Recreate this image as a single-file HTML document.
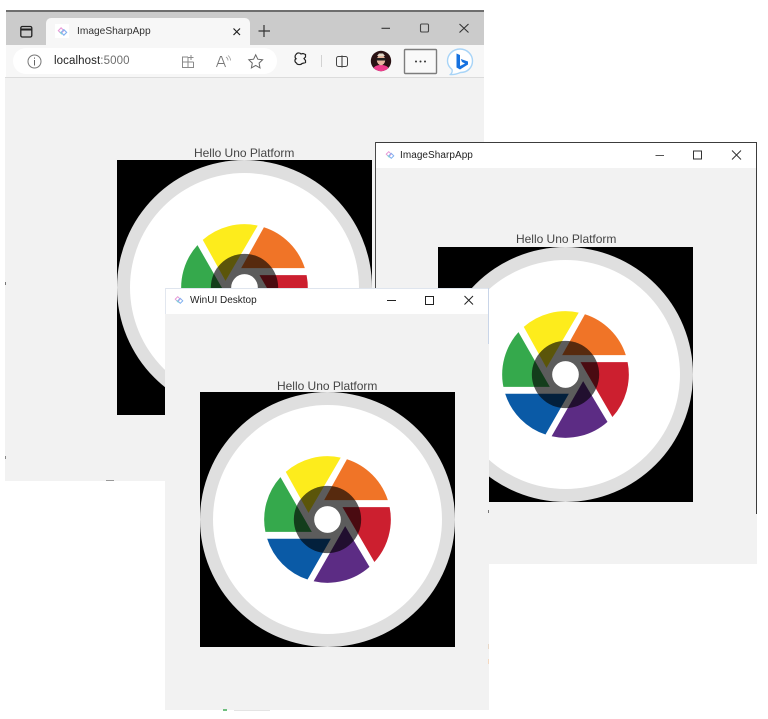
<!DOCTYPE html>
<html>
<head>
<meta charset="utf-8">
<style>
html,body{margin:0;padding:0;background:#fff;}
body{width:768px;height:719px;position:relative;overflow:hidden;font-family:"Liberation Sans",sans-serif;}
#w{position:absolute;left:0;top:0;width:768px;height:719px;overflow:hidden;filter:blur(.3px);}
.a{position:absolute;}
.hello{position:absolute;font-size:12px;line-height:14px;color:#454545;white-space:nowrap;letter-spacing:-.02px;}
.ttl{position:absolute;font-size:10px;line-height:13px;color:#222;white-space:nowrap;}
svg{position:absolute;overflow:visible;}
</style>
</head>
<body>
<svg width="0" height="0" style="position:absolute">
<defs>
<symbol id="pic" viewBox="0 0 255 255">
<rect width="255" height="255" fill="#000"/>
<circle cx="127.5" cy="127.5" r="127.5" fill="#dfdfdf"/>
<circle cx="127.5" cy="127.5" r="114.5" fill="#fff"/>
<g transform="translate(127.5 127.5) scale(.33333) translate(-232 -225)">
<path d="M106.800 82.100A190 190 0 0 1 271.700 39.200L175 205Z" fill="#fdec1c"/>
<path d="M290.300 44.200A190 190 0 0 1 413 167H222Z" fill="#f07427"/>
<path d="M418.300 187.700A190 190 0 0 1 372.700 352.600L277 187.700Z" fill="#cc1f2f"/>
<path d="M358 367A190 190 0 0 1 190.400 410.400L285 245Z" fill="#5c2c84"/>
<path d="M172 405A190 190 0 0 1 51 282.700H242Z" fill="#0a5aa6"/>
<path d="M45.700 262.300A190 190 0 0 1 90.900 97.800L185 262.300Z" fill="#35a94c"/>
<circle cx="232" cy="225" r="101" fill="#000" opacity=".64"/>
<circle cx="232" cy="225" r="40" fill="#fff"/>
</g>
</symbol>
<symbol id="uno" viewBox="0 0 12 12">
<path d="M4.500 2L7.500 5 4.500 8 1.500 5Z" fill="none" stroke="#e79ad6" stroke-width="1.200"/>
<path d="M7.500 4L10.500 7 7.500 10 4.500 7Z" fill="none" stroke="#7fb0f0" stroke-width="1.200"/>
<path d="M3 6.500L5.500 9" stroke="#7fd8d0" stroke-width="1.200"/>
</symbol>
</defs>
</svg>
<div id="w">

<!-- Browser window -->
<div class="a" style="left:5px;top:78px;width:479px;height:403px;background:#f2f2f2"></div>
<div class="a" style="left:6px;top:12px;width:478px;height:33px;background:#cbcbcb"></div>
<div class="a" style="left:6px;top:10px;width:478px;height:2px;background:#6e6e6e"></div>
<div class="a" style="left:46px;top:18px;width:204px;height:27px;background:#f7f7f7;border-radius:5px 5px 0 0"></div>
<div class="a" style="left:6px;top:45px;width:478px;height:32px;background:#f7f7f7"></div>
<div class="a" style="left:5px;top:77px;width:479px;height:1px;background:#dcdcdc"></div>
<div class="a" style="left:13px;top:48px;width:264px;height:26px;background:#fff;border-radius:13px"></div>
<div class="a" style="left:55px;top:24px;width:14px;height:14px;background:#fff"></div>
<svg style="left:57px;top:26px" width="11" height="11"><use href="#uno" width="11" height="11"/></svg>
<div class="a" style="left:77px;top:25px;font-size:10.2px;line-height:13px;color:#333;white-space:nowrap">ImageSharpApp</div>
<div class="a" style="left:54px;top:54px;font-size:11.5px;line-height:14px;color:#222;white-space:nowrap;letter-spacing:.1px">localhost<span style="color:#6e6e6e">:5000</span></div>

<svg style="left:0;top:0" width="500" height="80" fill="none" stroke="#333" stroke-width="1">
<!-- tab actions -->
<rect x="20.800" y="26.500" width="11" height="10.500" rx="1.500" stroke="#222" stroke-width="1.300"/>
<path d="M21 29.500H31.500" stroke="#222" stroke-width="2"/>
<path d="M233.500 28.500L240 35M240 28.500L233.500 35" stroke="#222" stroke-width="1.200"/>
<path d="M264 25V37M258.500 31H270" stroke="#333" stroke-width="1.200"/>
<!-- info -->
<circle cx="34.500" cy="61.500" r="6.500" stroke="#777"/>
<path d="M34.500 60V65.500M34.500 57.500V58.800" stroke="#666"/>
<!-- split add -->
<path d="M188 57H182.500V67.500H193.500V62M182.500 62H193.500M188 57V67.500M191 55V60M188.500 57.500H193.500" stroke="#8a8a8a"/>
<!-- read aloud -->
<path d="M216.500 67L220.500 56.500H221.500L225.500 67M218 63.500H224" stroke="#777"/>
<path d="M226 57C227.500 58 228 59 228 60.500M228 55.500C229.800 57 230.500 58.500 230.500 60.500" stroke="#999" stroke-width=".8"/>
<!-- star -->
<path d="M255.700 54.800L257.800 59.200 262.600 59.800 259.100 63.100 260 67.900 255.700 65.500 251.400 67.900 252.300 63.100 248.800 59.800 253.600 59.200Z" stroke="#666"/>
<!-- extension -->
<path d="M296 54.500C297 52.500 300 52.500 301 54L303 53.500 305.500 54.500V57L304 58.500 305.500 60.500V62.500L302 63.500C301 65 297 65 296.500 63 294.500 62 294.500 59.500 296 58.800 294.600 57.800 295 55 296 54.500Z" stroke="#222" stroke-width="1.200"/>
<!-- divider -->
<path d="M321.500 55V67" stroke="#d2d2d2"/>
<!-- split view -->
<path d="M342 55.500V67.500" stroke="#333"/>
<rect x="336.500" y="56.500" width="11" height="10" rx="2" stroke="#444"/>
<!-- window controls -->
<path d="M381.500 28.300H390" stroke="#333" stroke-width="1.100"/>
<rect x="420.500" y="24" width="8" height="8" rx="1.200" stroke="#444" stroke-width="1.100"/>
<path d="M459.500 24L468.500 32.500M468.500 24L459.500 32.500" stroke="#333" stroke-width="1.100"/>
<!-- avatar -->
<clipPath id="av"><circle cx="381" cy="61" r="10.200"/></clipPath>
<g clip-path="url(#av)" stroke="none">
<rect x="370" y="50" width="22" height="22" fill="#2a1214"/>
<path d="M372 72C373 66 377 65 381 65S389 66 390 72Z" fill="#ee3d8c"/>
<ellipse cx="381" cy="60" rx="4.200" ry="5.200" fill="#e8b7a0"/>
<path d="M376.500 58H385.500V60.500H376.500Z" fill="#222"/>
<path d="M377 56L379 53.500H383L385 56Z" fill="#e0d8c8"/>
</g>
<!-- menu -->
<rect x="404.500" y="49.500" width="32" height="24" rx="1" stroke="#7d7d7d" stroke-width="1.400" fill="#f9f9f9"/>
<g fill="#333" stroke="none"><circle cx="416" cy="61.500" r="1"/><circle cx="420.500" cy="61.500" r="1"/><circle cx="425" cy="61.500" r="1"/></g>
<!-- bing -->
<path d="M460 49C467 49 472.500 54.500 472.500 61S467.500 72.500 460.500 72.500C457 74 453.500 74.800 450.500 74.500C452 73 452.500 71 452 69.500C449 67 447.500 64.500 447.500 61C447.500 54.500 453 49 460 49Z" fill="#fff" stroke="#a8d4f7" stroke-width="1.400"/>
<path d="M456.500 53.500L460 55V66L465 63.500L462 62L460.800 59L468 61.500V64.500L460 69.500L456.500 67.500Z" fill="#1672e0" stroke="none"/>
</svg>

<!-- Browser content -->
<div class="hello" style="left:194px;top:146px">Hello Uno Platform</div>
<svg style="left:117px;top:160px" width="255" height="255"><use href="#pic" width="255" height="255"/></svg>
<div class="a" style="left:5px;top:282px;width:1px;height:3px;background:#777"></div>
<div class="a" style="left:5px;top:456px;width:1px;height:3px;background:#888"></div>
<div class="a" style="left:106px;top:480px;width:8px;height:1px;background:#999"></div>

<!-- Window 2 -->
<div class="a" style="left:375px;top:142px;width:382px;height:422px;background:#f2f2f2"></div>
<div class="a" style="left:375px;top:142px;width:382px;height:26px;background:#fff"></div>
<div class="a" style="left:375px;top:142px;width:382px;height:1px;background:#3c3c3c"></div>
<div class="a" style="left:375px;top:142px;width:1px;height:147px;background:#4a4a4a"></div>
<div class="a" style="left:756px;top:142px;width:1px;height:372px;background:#3c3c3c"></div>
<svg style="left:385px;top:150px" width="10" height="10"><use href="#uno" width="10" height="10"/></svg>
<div class="ttl" style="left:400px;top:149px;letter-spacing:.05px">ImageSharpApp</div>
<svg style="left:640px;top:145px" width="110" height="20" fill="none" stroke="#333" stroke-width="1">
<path d="M15.500 10.500H24" stroke="#555"/>
<rect x="53.500" y="6" width="8" height="8"/>
<path d="M92 5.500L101 14.500M101 5.500L92 14.500"/>
</svg>
<div class="hello" style="left:516px;top:232px">Hello Uno Platform</div>
<svg style="left:438px;top:247px" width="255" height="255"><use href="#pic" width="255" height="255"/></svg>

<!-- Window 3 -->
<div class="a" style="left:165px;top:288px;width:324px;height:422px;background:#f2f2f2"></div>
<div class="a" style="left:165px;top:288px;width:324px;height:26px;background:#fff"></div>
<div class="a" style="left:165px;top:288px;width:324px;height:1px;background:#dfe5ee"></div>
<div class="a" style="left:165px;top:288px;width:1px;height:26px;background:#e2e7ef"></div>
<div class="a" style="left:488px;top:288px;width:1px;height:56px;background:#c9d5e8"></div>
<div class="a" style="left:488px;top:510px;width:1px;height:3px;background:#777"></div>
<div class="a" style="left:488px;top:644px;width:1px;height:5px;background:#e8d8c8"></div>
<div class="a" style="left:488px;top:659px;width:1px;height:5px;background:#f4d8c0"></div>
<svg style="left:174px;top:295px" width="10" height="10"><use href="#uno" width="10" height="10"/></svg>
<div class="ttl" style="left:190px;top:294px">WinUI Desktop</div>
<svg style="left:380px;top:290px" width="100" height="20" fill="none" stroke="#222" stroke-width="1">
<path d="M7 10.500H16"/>
<rect x="45.500" y="6.500" width="8" height="8"/>
<path d="M84.500 6L93 14.500M93 6L84.500 14.500"/>
</svg>
<div class="hello" style="left:277px;top:379px">Hello Uno Platform</div>
<svg style="left:200px;top:392px" width="255" height="255"><use href="#pic" width="255" height="255"/></svg>
<div class="a" style="left:223px;top:709px;width:4px;height:2px;background:#6fbf7f"></div>
<div class="a" style="left:234px;top:710px;width:36px;height:1px;background:#e4e4e4"></div>
</div>
</body>
</html>
